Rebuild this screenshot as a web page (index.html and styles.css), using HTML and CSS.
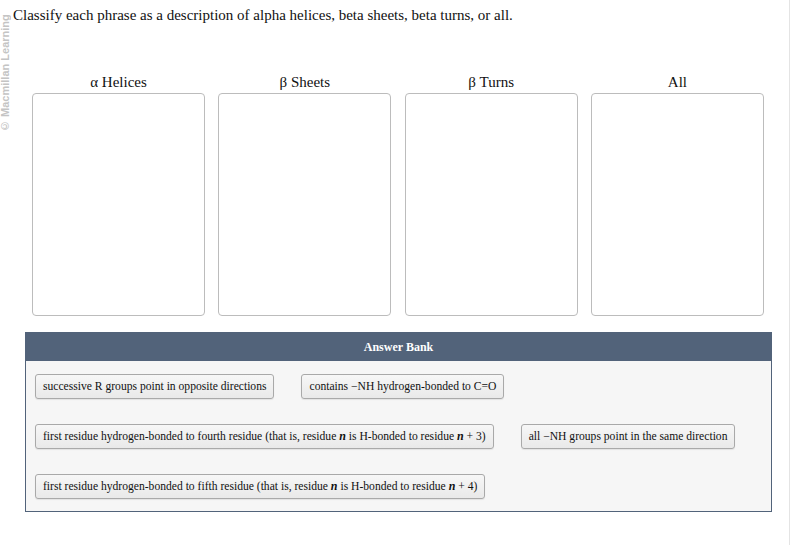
FILE: index.html
```html
<!DOCTYPE html>
<html lang="en">

<head>
    <meta charset="UTF-8">
    <title>Classify phrases</title>
    <link rel="stylesheet" href="styles.css">
</head>

<body>
    <div class="watermark">© Macmillan Learning</div>

    <p class="prompt">Classify each phrase as a description of alpha helices, beta sheets, beta turns, or all.</p>

    <div class="bins">
        <div class="bin">
            <div class="bin-title">α Helices</div>
            <div class="bin-box"></div>
        </div>
        <div class="bin">
            <div class="bin-title">β Sheets</div>
            <div class="bin-box"></div>
        </div>
        <div class="bin">
            <div class="bin-title">β Turns</div>
            <div class="bin-box"></div>
        </div>
        <div class="bin">
            <div class="bin-title">All</div>
            <div class="bin-box"></div>
        </div>
    </div>

    <div class="bank">
        <div class="bank-head">Answer Bank</div>
        <div class="bank-body">
            <div class="row">
                <span class="chip">successive R groups point in opposite directions</span>
                <span class="chip">contains −NH hydrogen-bonded to C=O</span>
            </div>
            <div class="row">
                <span class="chip">first residue hydrogen-bonded to fourth residue (that is, residue <i>n</i> is H-bonded to residue <i>n</i> + 3)</span>
                <span class="chip">all −NH groups point in the same direction</span>
            </div>
            <div class="row">
                <span class="chip">first residue hydrogen-bonded to fifth residue (that is, residue <i>n</i> is H-bonded to residue <i>n</i> + 4)</span>
            </div>
        </div>
    </div>
</body>

</html>
```

FILE: styles.css
```css
body {
    margin: 0;
    background: #fff;
    font-family: 'Liberation Serif', 'Times New Roman', serif;
    color: #111;
    width: 789px;
    height: 545px;
    border-right: 1px solid #e4e4e4;
    position: relative;
    overflow: hidden;
}

.watermark {
    position: absolute;
    left: -1px;
    top: 0;
    width: 13px;
    height: 132px;
    writing-mode: vertical-rl;
    transform: rotate(180deg);
    font-family: 'Liberation Sans', Arial, sans-serif;
    font-weight: bold;
    font-size: 11px;
    color: #c4c4c4;
    text-align: left;
    line-height: 13px;
    white-space: nowrap;
}

.prompt {
    margin: 0;
    padding: 5px 0 0 13px;
    font-size: 15px;
    line-height: 20px;
}

.bins {
    display: flex;
    gap: 13.3px;
    padding: 48px 0 0 32px;
}

.bin {
    width: 173px;
}

.bin-title {
    text-align: center;
    font-size: 15px;
    line-height: 18px;
    margin-bottom: 2px;
}

.bin-box {
    height: 221px;
    border: 1px solid #bcbcbc;
    border-radius: 4px;
    background: #fff;
}

.bank {
    margin: 16px 0 0 25px;
    width: 745px;
    border: 1px solid #52637a;
}

.bank-head {
    background: #52637a;
    color: #fff;
    font-weight: bold;
    font-size: 12px;
    text-align: center;
    height: 28px;
    line-height: 28px;
}

.bank-body {
    background: #f6f6f6;
    padding: 13px 9px 12px;
    display: flex;
    flex-direction: column;
    gap: 25px;
}

.row {
    display: flex;
    gap: 27px;
}

.chip {
    display: inline-block;
    height: 23px;
    line-height: 23px;
    padding: 0 7px;
    font-size: 11.6px;
    border: 1px solid #a9a9a9;
    border-radius: 3px;
    background: linear-gradient(#f7f7f7, #e9e9e9);
    box-shadow: 0 1px 1px rgba(0, 0, 0, 0.08);
    white-space: nowrap;
}

.chip i {
    font-weight: bold;
    font-size: 12px;
}
```
